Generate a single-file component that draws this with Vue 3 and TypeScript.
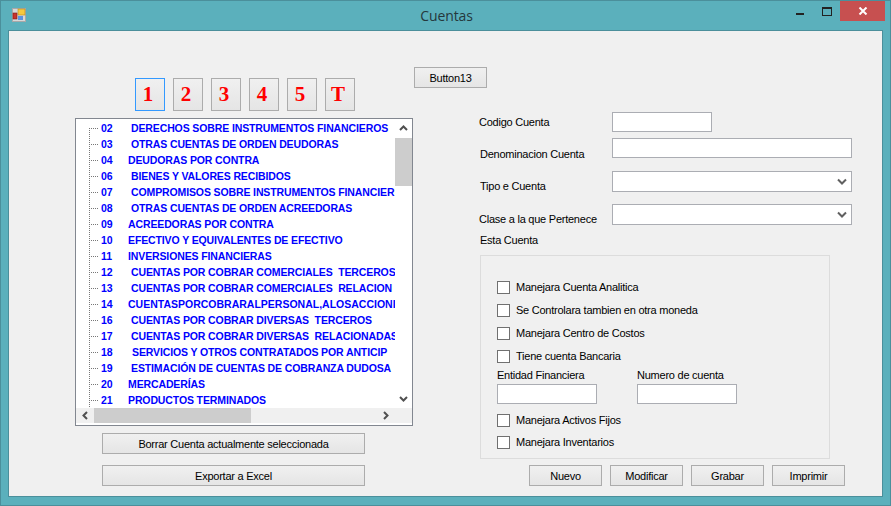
<script setup lang="ts">
interface Row { code: string; name: string; gap: number; tight?: boolean }
const rows: Row[] = [
  { code: '02', name: 'DERECHOS SOBRE INSTRUMENTOS FINANCIEROS', gap: 30 },
  { code: '03', name: 'OTRAS CUENTAS DE ORDEN DEUDORAS', gap: 30 },
  { code: '04', name: 'DEUDORAS POR CONTRA', gap: 27 },
  { code: '06', name: 'BIENES Y VALORES RECIBIDOS', gap: 30 },
  { code: '07', name: 'COMPROMISOS SOBRE INSTRUMENTOS FINANCIER', gap: 30 },
  { code: '08', name: 'OTRAS CUENTAS DE ORDEN ACREEDORAS', gap: 30 },
  { code: '09', name: 'ACREEDORAS POR CONTRA', gap: 27 },
  { code: '10', name: 'EFECTIVO Y EQUIVALENTES DE EFECTIVO', gap: 27 },
  { code: '11', name: 'INVERSIONES FINANCIERAS', gap: 27 },
  { code: '12', name: 'CUENTAS POR COBRAR COMERCIALES  TERCEROS', gap: 30 },
  { code: '13', name: 'CUENTAS POR COBRAR COMERCIALES  RELACION', gap: 30 },
  { code: '14', name: 'CUENTASPORCOBRARALPERSONAL,ALOSACCIONI', gap: 27, tight: true },
  { code: '16', name: 'CUENTAS POR COBRAR DIVERSAS  TERCEROS', gap: 30 },
  { code: '17', name: 'CUENTAS POR COBRAR DIVERSAS  RELACIONADAS', gap: 30 },
  { code: '18', name: 'SERVICIOS Y OTROS CONTRATADOS POR ANTICIP', gap: 31 },
  { code: '19', name: 'ESTIMACIÓN DE CUENTAS DE COBRANZA DUDOSA', gap: 30 },
  { code: '20', name: 'MERCADERÍAS', gap: 27 },
  { code: '21', name: 'PRODUCTOS TERMINADOS', gap: 27 },
]
const digits = ['1', '2', '3', '4', '5', 'T']
const upperChecks = ['Manejara Cuenta Analitica', 'Se Controlara tambien en otra moneda', 'Manejara Centro de Costos', 'Tiene cuenta Bancaria']
const lowerChecks = ['Manejara Activos Fijos', 'Manejara Inventarios']
const actions = ['Nuevo', 'Modificar', 'Grabar', 'Imprimir']
</script>

<template>
  <div class="window">
    <header class="titlebar">
      <svg class="app-icon" width="14" height="14" viewBox="0 0 14 14">
        <rect x="0.5" y="0.5" width="13" height="13" fill="#d8d8d8" stroke="#a8a8a8" />
        <rect x="6" y="1" width="7" height="6" fill="#f7c93e" stroke="#b88a20" stroke-width="0.6" />
        <rect x="1" y="5" width="4" height="6" fill="#c8322c" stroke="#7a1c18" stroke-width="0.6" />
        <rect x="6" y="8" width="5" height="4" fill="#5c94e0" />
      </svg>
      <span class="title">Cuentas</span>
      <div class="caption">
        <span class="min"></span>
        <span class="max"></span>
        <span class="close">
          <svg width="10" height="8" viewBox="0 0 10 8"><path d="M1.5 0.5 L8.5 7.5 M8.5 0.5 L1.5 7.5" stroke="#fff" stroke-width="2" /></svg>
        </span>
      </div>
    </header>

    <main class="client">
      <section class="left">
        <div class="top-row">
          <div class="digits">
            <button v-for="(d, i) in digits" :key="d" class="btn digit" :class="{ focused: i === 0 }">{{ d }}</button>
          </div>
          <button class="btn b13">Button13</button>
        </div>

        <div class="tree">
          <div class="tree-body">
            <div v-for="(r, i) in rows" :key="r.code" class="row">
              <span class="twig" :class="{ first: i === 0 }"></span>
              <span class="code">{{ r.code }}</span>
              <span class="name" :class="{ tight: r.tight }" :style="{ marginLeft: r.gap - 14 + 'px' }">{{ r.name }}</span>
            </div>
          </div>
          <div class="vbar">
            <svg class="arrow" width="17" height="19" viewBox="0 0 17 19"><path d="M5 11 L8.5 7.5 L12 11" fill="none" stroke="#505050" stroke-width="2" /></svg>
            <div class="vthumb"></div>
            <div class="spacer"></div>
            <svg class="arrow" width="17" height="17" viewBox="0 0 17 17"><path d="M5 6 L8.5 9.5 L12 6" fill="none" stroke="#505050" stroke-width="2" /></svg>
          </div>
          <div class="hbar">
            <svg width="18" height="15" viewBox="0 0 18 15"><path d="M11 4 L7.5 7.5 L11 11" fill="none" stroke="#505050" stroke-width="2" /></svg>
            <div class="hthumb"></div>
            <div class="spacer"></div>
            <svg width="17" height="15" viewBox="0 0 17 15"><path d="M6 4 L9.5 7.5 L6 11" fill="none" stroke="#505050" stroke-width="2" /></svg>
          </div>
          <div class="corner"></div>
        </div>

        <button class="btn wide first-wide">Borrar Cuenta actualmente seleccionada</button>
        <button class="btn wide second-wide">Exportar a Excel</button>
      </section>

      <section class="right">
        <div class="field f1">
          <label class="lbl l1">Codigo Cuenta</label>
          <div class="input short"></div>
        </div>
        <div class="field f2">
          <label class="lbl l2">Denominacion Cuenta</label>
          <div class="input long"></div>
        </div>
        <div class="field f3">
          <label class="lbl l3">Tipo e Cuenta</label>
          <div class="input long select">
            <svg width="12" height="8" viewBox="0 0 12 8"><path d="M2 1.5 L6 5.5 L10 1.5" fill="none" stroke="#606060" stroke-width="2" /></svg>
          </div>
        </div>
        <div class="field f4">
          <label class="lbl l4">Clase a la que Pertenece</label>
          <div class="input long select">
            <svg width="12" height="8" viewBox="0 0 12 8"><path d="M2 1.5 L6 5.5 L10 1.5" fill="none" stroke="#606060" stroke-width="2" /></svg>
          </div>
        </div>
        <div class="esta">Esta Cuenta</div>

        <div class="group">
          <div v-for="c in upperChecks" :key="c" class="check"><span class="box"></span>{{ c }}</div>
          <div class="bank">
            <div class="bank-col">
              <label>Entidad Financiera</label>
              <div class="input bank-input"></div>
            </div>
            <div class="bank-col">
              <label>Numero de cuenta</label>
              <div class="input bank-input"></div>
            </div>
          </div>
          <div class="lower">
            <div v-for="c in lowerChecks" :key="c" class="check low"><span class="box"></span>{{ c }}</div>
          </div>
        </div>

        <div class="actions">
          <button v-for="a in actions" :key="a" class="btn action">{{ a }}</button>
        </div>
      </section>
    </main>
  </div>
</template>

<style>
html, body { margin: 0; padding: 0; background: #5bb0bc; }
</style>

<style scoped>
.window {
  width: 891px;
  height: 506px;
  box-sizing: border-box;
  background: #5bb0bc;
  border: 1px solid #4b8f9b;
  display: flex;
  flex-direction: column;
  font-family: "Liberation Sans", Arial, sans-serif;
  font-size: 11px;
  letter-spacing: -0.24px;
  color: #000;
  overflow: hidden;
}
.titlebar {
  height: 29px;
  flex: none;
  display: flex;
  align-items: flex-start;
  position: relative;
}
.app-icon { margin: 7px 0 0 11px; }
.title {
  position: absolute;
  left: 0;
  right: 0;
  top: 5px;
  padding-left: 2px;
  text-align: center;
  font-family: "Open Sans", sans-serif;
  font-size: 14px;
  letter-spacing: -0.1px;
  line-height: 20px;
  color: #25383c;
}
.caption {
  margin-left: auto;
  margin-right: 5px;
  display: flex;
  align-items: flex-start;
}
.min { width: 8px; height: 2px; background: #222; margin: 12px 18px 0 0; }
.max { width: 8px; height: 6px; border: 1px solid #222; border-top-width: 2px; margin: 6px 8px 0 0; }
.close {
  width: 45px;
  height: 20px;
  background: #c75050;
  display: flex;
  align-items: center;
  justify-content: center;
}
.client {
  flex: none;
  width: 875px;
  height: 467px;
  margin-left: 7px;
  box-sizing: border-box;
  background: #f0f0f0;
  border: 1px solid #4b8f9b;
  display: flex;
}
.btn {
  box-sizing: border-box;
  border: 1px solid #acacac;
  background: linear-gradient(#f0f0f0, #e5e5e5);
  font: inherit;
  letter-spacing: inherit;
  color: #000;
  padding: 0;
  margin: 0;
  flex: none;
}
.left {
  width: 405px;
  flex: none;
  padding: 36px 0 0 66px;
  box-sizing: border-box;
}
.top-row {
  display: flex;
  align-items: flex-start;
  width: 412px;
  height: 51px;
}
.digits {
  display: flex;
  gap: 8px;
  margin: 11px 0 0 60px;
  flex: none;
}
.digit {
  width: 30px;
  height: 33px;
  padding-right: 4px;
  font-family: "Liberation Serif", serif;
  font-weight: 700;
  font-size: 21px;
  letter-spacing: 0;
  line-height: 1;
  color: #ff0000;
}
.focused { border-color: #3399ff; }
.b13 {
  width: 73px;
  height: 21px;
  margin-left: 59px;
}
.tree {
  width: 338px;
  height: 308px;
  box-sizing: border-box;
  border: 1px solid #828790;
  background: #fff;
  display: grid;
  grid-template-columns: 319px 17px;
  grid-template-rows: 289px 17px;
}
.tree-body {
  overflow: hidden;
  padding: 1px 0 0 13px;
  font-weight: 700;
  font-size: 10.5px;
  letter-spacing: -0.12px;
  color: #0000ff;
}
.row {
  display: flex;
  height: 16px;
  line-height: 16px;
  white-space: pre;
}
.twig {
  width: 9px;
  flex: none;
  margin-right: 3px;
  background:
    repeating-linear-gradient(to bottom, #777 0 1px, transparent 1px 2px) left top / 1px 100% no-repeat,
    repeating-linear-gradient(to right, #777 0 1px, transparent 1px 2px) left center / 100% 1px no-repeat;
}
.twig.first {
  background:
    repeating-linear-gradient(to bottom, #777 0 1px, transparent 1px 2px) left bottom / 1px 50% no-repeat,
    repeating-linear-gradient(to right, #777 0 1px, transparent 1px 2px) left center / 100% 1px no-repeat;
}
.code { width: 14px; flex: none; }
.name { flex: none; }
.tight { letter-spacing: 0; }
.vbar {
  background: #fff;
  display: flex;
  flex-direction: column;
  overflow: hidden;
}
.arrow { flex: none; display: block; }
.vthumb { height: 48px; background: #cdcdcd; flex: none; }
.spacer { flex: 1; }
.hbar {
  background: #f0f0f0;
  display: flex;
  align-items: flex-start;
  border-bottom: 2px solid #fff;
  box-sizing: border-box;
}
.hthumb { width: 157px; height: 15px; background: #cdcdcd; flex: none; }
.corner { background: #f0f0f0; border-bottom: 2px solid #fff; box-sizing: border-box; }
.wide {
  display: block;
  width: 263px;
  height: 21px;
  margin-left: 27px;
}
.first-wide { margin-top: 7px; }
.second-wide { margin-top: 11px; }
.right {
  flex: 1;
  padding-top: 81px;
  box-sizing: border-box;
}
.field {
  display: flex;
  align-items: flex-start;
  padding-left: 65px;
}
.f1, .f2 { height: 20px; }
.f3, .f4 { height: 21px; }
.f2 { margin-top: 6px; }
.f3 { margin-top: 13px; }
.f4 { margin-top: 12px; }
.lbl { width: 133px; flex: none; line-height: 14px; white-space: nowrap; }
.l1 { padding-top: 3px; }
.l2 { padding: 9px 0 0 1px; width: 132px; }
.l3 { padding: 8px 0 0 1px; width: 132px; }
.l4 { padding-top: 8px; }
.input {
  box-sizing: border-box;
  border: 1px solid #abadb3;
  background: #fff;
}
.short { width: 100px; height: 20px; }
.long { width: 240px; height: 20px; }
.select {
  height: 21px;
  display: flex;
  align-items: center;
  justify-content: flex-end;
  padding-right: 3px;
}
.esta {
  margin: 8px 0 0 66px;
  line-height: 14px;
}
.group {
  width: 350px;
  height: 204px;
  box-sizing: border-box;
  margin: 8px 0 0 66px;
  border: 1px solid #dcdcdc;
  padding: 25px 0 0 16px;
}
.check {
  display: flex;
  align-items: center;
  height: 13px;
  margin-bottom: 10px;
  line-height: 13px;
  white-space: nowrap;
}
.box {
  width: 13px;
  height: 13px;
  box-sizing: border-box;
  border: 1px solid #707070;
  background: #fff;
  margin-right: 6px;
  flex: none;
}
.bank {
  display: flex;
  gap: 40px;
  margin-top: -5px;
}
.bank-col { width: 100px; white-space: nowrap; line-height: 14px; }
.bank-col label { display: block; height: 14px; }
.bank-input { width: 100px; height: 20px; margin-top: 2px; }
.lower { margin-top: 10px; }
.check.low { margin-bottom: 9px; }
.actions {
  display: flex;
  gap: 8px;
  margin: 6px 0 0 115px;
}
.action { width: 73px; height: 21px; }
</style>
